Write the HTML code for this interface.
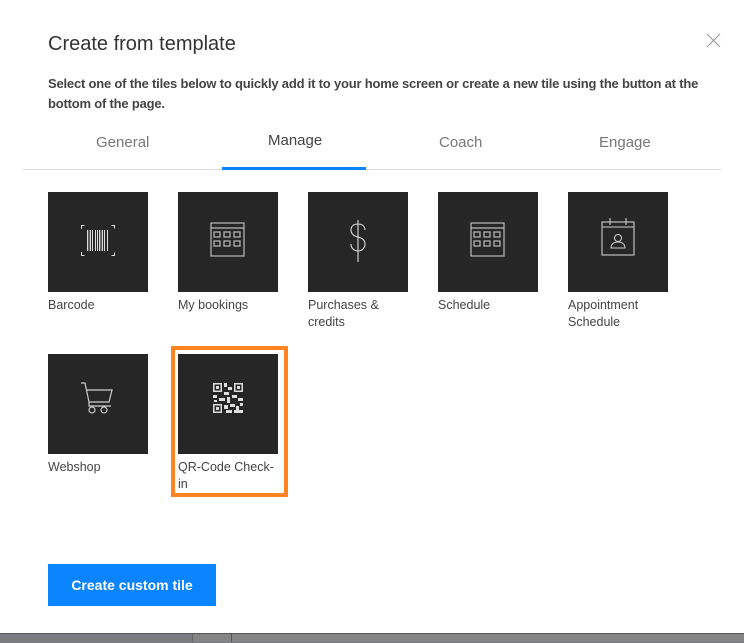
<!DOCTYPE html>
<html><head><style>
body{margin:0;width:744px;height:642px;background:#fff;position:relative;overflow:hidden;font-family:"Liberation Sans",sans-serif;}
.a{position:absolute}
.tile{position:absolute;width:100px;height:100px;background:#262626}
.tile svg{position:absolute;left:0;top:0}
.lbl{position:absolute;font-size:12.5px;color:#444;line-height:17px;width:110px}
.tab{position:absolute;top:134px;font-size:15px;color:#777;}
</style></head><body>
<div class="a" style="left:48px;top:33px;font-size:20px;color:#333">Create from template</div>
<svg class="a" style="left:706px;top:33px" width="15" height="15"><path d="M1 1L14 14M14 1L1 14" stroke="#999" stroke-width="1.1"/></svg>
<div class="a" style="left:48px;top:74px;width:680px;font-size:13px;font-weight:bold;color:#444;line-height:20px;letter-spacing:-0.2px">Select one of the tiles below to quickly add it to your home screen or create a new tile using the button at the bottom of the page.</div>
<div class="tab" style="left:96px">General</div>
<div class="tab" style="left:268px;top:132px;color:#444">Manage</div>
<div class="tab" style="left:439px">Coach</div>
<div class="tab" style="left:599px">Engage</div>
<div class="a" style="left:23px;top:169px;width:698px;height:1px;background:#ddd"></div>
<div class="a" style="left:222px;top:167px;width:144px;height:3px;background:#0a84ff"></div>

<div class="tile" style="left:48px;top:192px"><svg width="100" height="100" fill="none" stroke="#ddd" stroke-width="1"><path d="M33.5 37v-3.5h3M63.5 33.5h3v3M33.5 60v3.5h3M63.5 63.5h3v-3"/><path d="M39.5 38v21M42.5 38v21M44.5 38v21M47.5 38v21M49.5 38v21M51.5 38v21M54.5 38v21M56.5 38v21M59.5 38v21" stroke-width="1"/><path d="M41 38v21M53 38v21" stroke-width="0.6"/></svg></div>
<div class="lbl" style="left:48px;top:297px">Barcode</div>
<div class="tile" style="left:178px;top:192px"><svg width="100" height="100" fill="none" stroke="#bbb" stroke-width="1.2"><rect x="33" y="31" width="33" height="33"/><path d="M33 36h33"/><rect x="36" y="40" width="6" height="5"/><rect x="46" y="40" width="6" height="5"/><rect x="56" y="40" width="6" height="5"/><rect x="36" y="49" width="6" height="5"/><rect x="46" y="49" width="6" height="5"/><rect x="56" y="49" width="6" height="5"/></svg></div>
<div class="lbl" style="left:178px;top:297px">My bookings</div>
<div class="tile" style="left:308px;top:192px"><svg width="100" height="100" fill="none" stroke="#ddd" stroke-width="1.1"><path d="M50 28v42M57 38c0-4-3-6-7-6s-7 2-7 6 3 6 7 7 7 3 7 7-3 7-7 7-7-3-7-7"/></svg></div>
<div class="lbl" style="left:308px;top:297px">Purchases &amp; credits</div>
<div class="tile" style="left:438px;top:192px"><svg width="100" height="100" fill="none" stroke="#bbb" stroke-width="1.2"><rect x="33" y="31" width="33" height="33"/><path d="M33 36h33"/><rect x="36" y="40" width="6" height="5"/><rect x="46" y="40" width="6" height="5"/><rect x="56" y="40" width="6" height="5"/><rect x="36" y="49" width="6" height="5"/><rect x="46" y="49" width="6" height="5"/><rect x="56" y="49" width="6" height="5"/></svg></div>
<div class="lbl" style="left:438px;top:297px">Schedule</div>
<div class="tile" style="left:568px;top:192px"><svg width="100" height="100" fill="none" stroke="#ccc" stroke-width="1.1"><rect x="34" y="30" width="32" height="33"/><path d="M34 35h32M42 26v7M58 26v7"/><circle cx="50" cy="46" r="3.5"/><path d="M43 56c0-4 3-6 7-6s7 2 7 6z"/></svg></div>
<div class="lbl" style="left:568px;top:297px">Appointment Schedule</div>

<div class="tile" style="left:48px;top:354px"><svg width="100" height="100" fill="none" stroke="#ccc" stroke-width="1.2"><path d="M33 29h4l4 19h20l3-12H38"/><path d="M41 48v4h22"/><circle cx="44" cy="56" r="3"/><circle cx="56" cy="56" r="3"/></svg></div>
<div class="lbl" style="left:48px;top:459px">Webshop</div>
<div class="a" style="left:171px;top:346px;width:109px;height:143px;border:4px solid #ff8420"></div>
<div class="tile" style="left:178px;top:354px"><svg width="100" height="100"><g fill="#ddd"><rect x="35" y="29" width="9" height="9"/><rect x="56" y="29" width="9" height="9"/><rect x="35" y="50" width="9" height="9"/></g><g fill="#262626"><rect x="36.5" y="30.5" width="6" height="6"/><rect x="57.5" y="30.5" width="6" height="6"/><rect x="36.5" y="51.5" width="6" height="6"/></g><g fill="#ddd"><rect x="38" y="32" width="3" height="3"/><rect x="59" y="32" width="3" height="3"/><rect x="38" y="53" width="3" height="3"/><rect x="46" y="29" width="3" height="4"/><rect x="50" y="33" width="4" height="3"/><rect x="46" y="38" width="5" height="3"/><rect x="35" y="41" width="4" height="3"/><rect x="41" y="44" width="6" height="3"/><rect x="49" y="43" width="3" height="6"/><rect x="54" y="41" width="5" height="3"/><rect x="60" y="44" width="5" height="3"/><rect x="46" y="51" width="4" height="4"/><rect x="52" y="50" width="5" height="3"/><rect x="58" y="52" width="3" height="5"/><rect x="62" y="49" width="3" height="3"/><rect x="48" y="56" width="6" height="3"/><rect x="56" y="56" width="9" height="3"/><rect x="36" y="46" width="3" height="2"/></g></svg></div>
<div class="lbl" style="left:178px;top:459px;width:104px">QR-Code Check-in</div>

<div class="a" style="left:48px;top:564px;width:168px;height:42px;background:#0a84ff;color:#fff;font-weight:bold;font-size:14px;text-align:center;line-height:42px">Create custom tile</div>

<div class="a" style="left:0;top:633px;width:744px;height:9px;background:#7a7b80;border-top:1px solid #555"></div>
<div class="a" style="left:192px;top:634px;width:40px;height:8px;background:#858585;border-left:1px solid #666"></div>
<div class="a" style="left:231px;top:634px;width:218px;height:8px;background:#858585;border-left:1px solid #555;border-right:1px solid #555"></div>
<div class="a" style="left:450px;top:634px;width:294px;height:8px;background:#858585"></div>
</body></html>
